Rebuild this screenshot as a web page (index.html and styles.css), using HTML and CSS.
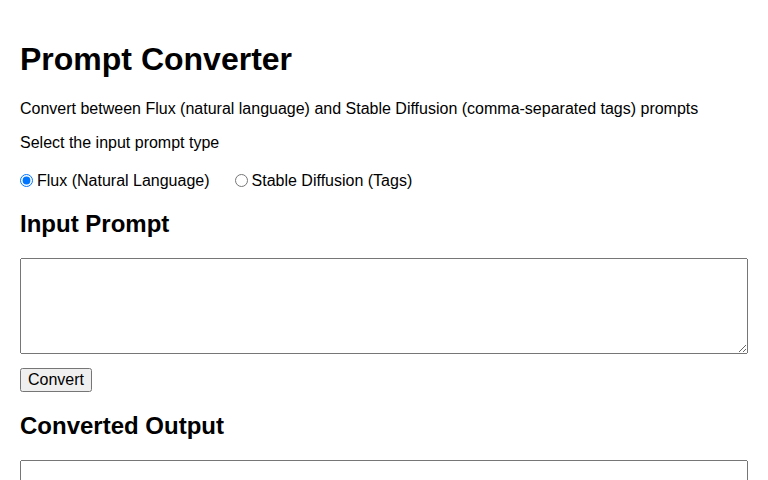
FILE: index.html
```html
<!DOCTYPE html>
<html lang="en">
<head>
  <meta charset="UTF-8">
  <meta name="viewport" content="width=device-width, initial-scale=1.0">
  <title>Prompt Converter</title>
  <link rel="stylesheet" href="styles.css">
</head>
<body>
  <h1>Prompt Converter</h1>
  <p>Convert between Flux (natural language) and Stable Diffusion (comma-separated tags) prompts</p>

  <p>Select the input prompt type</p>
  <div class="type-select">
    <label><input type="radio" name="ptype" value="flux" checked> Flux (Natural Language)</label>
    <label><input type="radio" name="ptype" value="sd"> Stable Diffusion (Tags)</label>
  </div>

  <h2>Input Prompt</h2>
  <textarea id="inputPrompt" class="prompt-box"></textarea>
  <button id="convertBtn">Convert</button>

  <h2>Converted Output</h2>
  <textarea id="outputPrompt" class="prompt-box" readonly></textarea>
</body>
</html>
```

FILE: styles.css
```css
body {
  margin: 0;
  padding: 20px;
  font-family: "Liberation Sans", Arial, sans-serif;
  color: #000;
  background: #fff;
}
h1 {
  font-size: 32px;
  margin: 21px 0 22px;
}
h2 {
  font-size: 24px;
  margin: 20px 0;
}
p {
  margin: 16px 0;
}
.type-select {
  display: flex;
  gap: 25px;
  margin-top: 19px;
}
.type-select label {
  display: flex;
  align-items: center;
}
.type-select input {
  margin: 3px 4px 3px 0;
}
.prompt-box {
  display: block;
  box-sizing: border-box;
  width: 100%;
  height: 96px;
  margin-bottom: 14px;
}
button {
  font-family: "Liberation Sans", Arial, sans-serif;
  font-size: 16px;
}
```
